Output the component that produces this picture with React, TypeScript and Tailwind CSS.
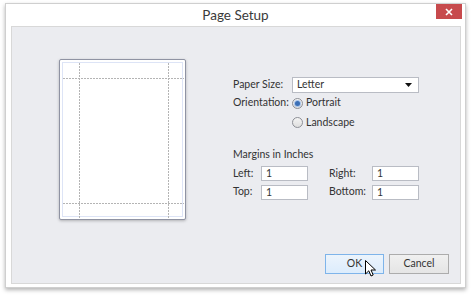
import React from 'react';

const font = { fontFamily: 'Lato, "Open Sans", sans-serif' };

const Radio: React.FC<{ checked?: boolean; label: string }> = ({ checked, label }) => (
  <div className="flex items-center gap-[3px]">
    <span className="w-[11px] h-[11px] shrink-0 rounded-full border border-[#8d8f96] bg-gradient-to-b from-[#f4f4f4] to-[#dedede] flex items-center justify-center">
      {checked && <span className="w-[5px] h-[5px] rounded-full bg-[#3b6fb6] ring-1 ring-[#a9c4ea]" />}
    </span>
    <span>{label}</span>
  </div>
);

const Field: React.FC<{ value: string }> = ({ value }) => (
  <div className="w-[47px] h-[15px] shrink-0 bg-white border border-[#b9bcc4] pl-[4px] flex items-center leading-none">{value}</div>
);

const PagePreview: React.FC = () => (
  <div className="w-[127px] h-[161px] rounded-[2px] border border-[#8f93a3] bg-white shadow-[0_1px_3px_rgba(0,0,0,0.25)] p-[2px]">
    <div className="w-full h-full border border-[#dde4f6]">
      <svg width="121" height="155" className="block">
        <g stroke="#b4b4b4" strokeWidth="1" strokeDasharray="2 1">
          <line x1="16.5" y1="0" x2="16.5" y2="155" />
          <line x1="105.5" y1="0" x2="105.5" y2="155" />
          <line x1="0" y1="15.5" x2="121" y2="15.5" />
          <line x1="0" y1="140.5" x2="121" y2="140.5" />
        </g>
      </svg>
    </div>
  </div>
);

export default function App() {
  return (
    <div className="w-[474px] h-[298px] bg-white pt-[3px] pl-[5px] text-[#333333]" style={font}>
      <div className="w-[461px] h-[285px] border border-[#cfcfcf] bg-white flex flex-col shadow-[0_2px_4px_rgba(0,0,0,0.3)]">
        <div className="h-[22px] grid grid-cols-[1fr_auto_1fr] items-start">
          <div />
          <div className="text-[13.5px] leading-[22px] text-[#3a3a3a]">Page Setup</div>
          <div className="flex justify-end pr-[3px]">
            <div className="w-[26px] h-[15px] bg-[#c74a4d] flex items-center justify-center">
              <svg width="8" height="8" viewBox="0 0 8 8">
                <path d="M1 1 L7 7 M7 1 L1 7" stroke="#ffffff" strokeWidth="1.6" />
              </svg>
            </div>
          </div>
        </div>
        <div className="ml-[5px] mr-[4px] h-[258px] border border-[#d8d8d8] bg-[#ebecf0] flex flex-col text-[10.5px]">
          <div className="flex">
            <div className="ml-[47px] mt-[32px]">
              <PagePreview />
            </div>
            <div className="ml-[47px] mt-[50px] flex flex-col">
              <div className="h-[16px] flex items-center">
                <span className="w-[59px] shrink-0">Paper Size:</span>
                <div className="w-[127px] h-[16px] bg-white border border-[#b9bcc4] flex items-center justify-between pl-[4px] pr-[6px]">
                  <span>Letter</span>
                  <svg width="7" height="4" viewBox="0 0 7 4">
                    <path d="M0 0 H7 L3.5 4 Z" fill="#111111" />
                  </svg>
                </div>
              </div>
              <div className="h-[20px] flex items-center">
                <span className="w-[59px] shrink-0">Orientation:</span>
                <Radio checked label="Portrait" />
              </div>
              <div className="h-[19px] flex items-center pl-[59px]">
                <Radio label="Landscape" />
              </div>
              <div className="h-[18px] mt-[14px] flex items-center">Margins in Inches</div>
              <div className="mt-[2px] flex flex-col gap-[3px]">
                <div className="h-[15px] flex items-center">
                  <span className="w-[28px] shrink-0">Left:</span>
                  <Field value="1" />
                  <span className="w-[43px] shrink-0 ml-[21px]">Right:</span>
                  <Field value="1" />
                </div>
                <div className="h-[16px] flex items-center">
                  <span className="w-[28px] shrink-0">Top:</span>
                  <Field value="1" />
                  <span className="w-[43px] shrink-0 ml-[21px]">Bottom:</span>
                  <Field value="1" />
                </div>
              </div>
            </div>
          </div>
          <div className="mt-auto mb-[9px] mr-[11px] flex justify-end gap-[5px]">
            <div className="relative w-[59px] h-[20px] border border-[#7eb4ea] bg-gradient-to-b from-[#ecf4fc] to-[#dcecfc] flex items-center justify-center">
              OK
              <svg className="absolute left-[39px] top-[5px]" width="12" height="18" viewBox="0 0 12 18">
                <path d="M0.5 0.5 V14 L3.8 10.8 L6 16 L8.2 15 L6 10 H10.5 Z" fill="#ffffff" stroke="#000000" strokeWidth="1" strokeLinejoin="round" />
              </svg>
            </div>
            <div className="w-[60px] h-[20px] border border-[#acacac] bg-gradient-to-b from-[#f0f0f0] to-[#e5e5e5] flex items-center justify-center">
              Cancel
            </div>
          </div>
        </div>
      </div>
    </div>
  );
}
